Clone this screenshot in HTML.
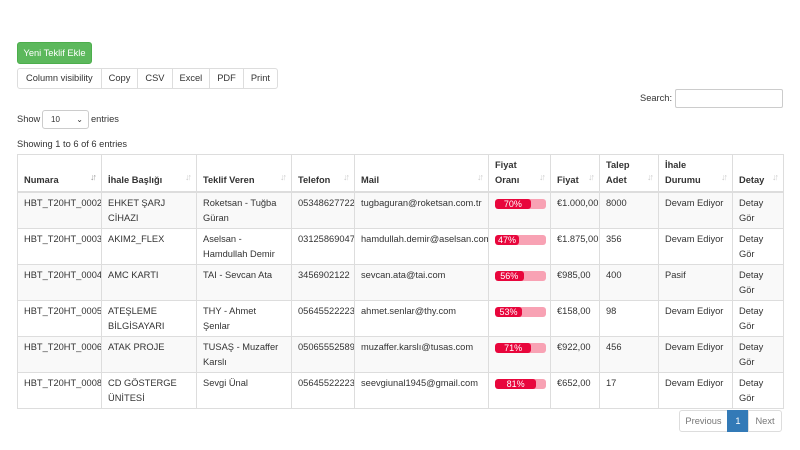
<!DOCTYPE html>
<html><head><meta charset="utf-8"><style>
*{box-sizing:border-box;margin:0;padding:0}
body{width:800px;height:450px;background:#fff;font-family:"Liberation Sans",sans-serif;font-size:9.3px;color:#333;position:relative;overflow:hidden}
.abs{position:absolute}
.green{left:17px;top:42px;width:75px;height:22px;background:#5cb85c;border:1px solid #4cae4c;border-radius:3px;color:#fff;font-size:9.3px;line-height:20px;text-align:center}
.bg{left:17px;top:68px;height:21px;display:flex}
.bg div{border:1px solid #ddd;margin-left:-1px;line-height:19px;padding:0 7px;color:#333;background:#fff}
.bg div:first-child{border-radius:3px 0 0 3px;margin-left:0}
.bg div:last-child{border-radius:0 3px 3px 0}
table{position:absolute;left:17px;top:154px;width:766px;border-collapse:collapse;table-layout:fixed}
td,th{border:1px solid #ddd;padding:3px 6px 0;vertical-align:top;line-height:15px;text-align:left;font-size:9.3px;overflow:hidden;white-space:normal}
th{height:35px;vertical-align:bottom;font-weight:bold;border-bottom:2px solid #ddd;position:relative;padding-bottom:3px}
th span{position:absolute;right:6px;bottom:6px;color:#ccc;font-size:9px;font-weight:normal;letter-spacing:-2px}
td{height:36px}
tr.o td{background:#f9f9f9}
.pb{margin-top:3px;height:10px;background:#f8a2b4;border-radius:3px;position:relative;width:51px;overflow:hidden}
.pb i{display:block;height:10px;background:#e8063c;border-radius:3px;color:#fff;font-style:normal;font-size:9px;line-height:10px;text-align:center}
</style></head><body>
<div class="abs green">Yeni Teklif Ekle</div>
<div class="abs bg"><div style="padding:0 8px">Column visibility</div><div>Copy</div><div>CSV</div><div>Excel</div><div>PDF</div><div>Print</div></div>
<div class="abs" style="left:640px;top:92px;line-height:12px">Search:</div>
<div class="abs" style="left:675px;top:89px;width:108px;height:19px;border:1px solid #ccc;border-radius:2px"></div>
<div class="abs" style="left:17px;top:113px;line-height:12px">Show</div>
<div class="abs" style="left:42px;top:110px;width:47px;height:19px;border:1px solid #ccc;border-radius:3px;font-size:8px;line-height:17px;padding-left:8px">10<span style="position:absolute;right:5px;font-size:8px">⌄</span></div>
<div class="abs" style="left:91px;top:113px;line-height:12px">entries</div>
<div class="abs" style="left:17px;top:138px;line-height:12px">Showing 1 to 6 of 6 entries</div>
<table>
<colgroup><col style="width:84px"><col style="width:95px"><col style="width:95px"><col style="width:63px"><col style="width:134px"><col style="width:62px"><col style="width:49px"><col style="width:59px"><col style="width:74px"><col style="width:51px"></colgroup>
<tr><th>Numara<span style="color:#999">↓↑</span></th><th>İhale Başlığı<span>↓↑</span></th><th>Teklif Veren<span>↓↑</span></th><th>Telefon<span>↓↑</span></th><th>Mail<span>↓↑</span></th><th>Fiyat<br>Oranı<span>↓↑</span></th><th>Fiyat<span>↓↑</span></th><th>Talep<br>Adet<span>↓↑</span></th><th>İhale<br>Durumu<span>↓↑</span></th><th>Detay<span>↓↑</span></th></tr>
<tr class="o"><td>HBT_T20HT_0002</td><td>EHKET ŞARJ CİHAZI</td><td>Roketsan - Tuğba Güran</td><td>05348627722</td><td>tugbaguran@roketsan.com.tr</td><td><div class="pb"><i style="width:70%">70%</i></div></td><td>€1.000,00</td><td>8000</td><td>Devam Ediyor</td><td>Detay Gör</td></tr>
<tr><td>HBT_T20HT_0003</td><td>AKIM2_FLEX</td><td>Aselsan - Hamdullah Demir</td><td>03125869047</td><td>hamdullah.demir@aselsan.com</td><td><div class="pb"><i style="width:47%">47%</i></div></td><td>€1.875,00</td><td>356</td><td>Devam Ediyor</td><td>Detay Gör</td></tr>
<tr class="o"><td>HBT_T20HT_0004</td><td>AMC KARTI</td><td>TAI - Sevcan Ata</td><td>3456902122</td><td>sevcan.ata@tai.com</td><td><div class="pb"><i style="width:56%">56%</i></div></td><td>€985,00</td><td>400</td><td>Pasif</td><td>Detay Gör</td></tr>
<tr><td>HBT_T20HT_0005</td><td>ATEŞLEME BİLGİSAYARI</td><td>THY - Ahmet Şenlar</td><td>05645522223</td><td>ahmet.senlar@thy.com</td><td><div class="pb"><i style="width:53%">53%</i></div></td><td>€158,00</td><td>98</td><td>Devam Ediyor</td><td>Detay Gör</td></tr>
<tr class="o"><td>HBT_T20HT_0006</td><td>ATAK PROJE</td><td>TUSAŞ - Muzaffer Karslı</td><td>05065552589</td><td>muzaffer.karslı@tusas.com</td><td><div class="pb"><i style="width:71%">71%</i></div></td><td>€922,00</td><td>456</td><td>Devam Ediyor</td><td>Detay Gör</td></tr>
<tr><td>HBT_T20HT_0008</td><td>CD GÖSTERGE ÜNİTESİ</td><td>Sevgi Ünal</td><td>05645522223</td><td>seevgiunal1945@gmail.com</td><td><div class="pb"><i style="width:81%">81%</i></div></td><td>€652,00</td><td>17</td><td>Devam Ediyor</td><td>Detay Gör</td></tr>
</table>
<div class="abs" style="left:679px;top:410px;height:22px;display:flex;line-height:20px">
<div style="border:1px solid #ddd;border-radius:3px 0 0 3px;width:49px;text-align:center;color:#777">Previous</div>
<div style="background:#337ab7;border:1px solid #337ab7;color:#fff;width:22px;text-align:center;margin-left:-1px">1</div>
<div style="border:1px solid #ddd;border-radius:0 3px 3px 0;width:34px;text-align:center;color:#777;margin-left:-1px">Next</div>
</div>
</body></html>
